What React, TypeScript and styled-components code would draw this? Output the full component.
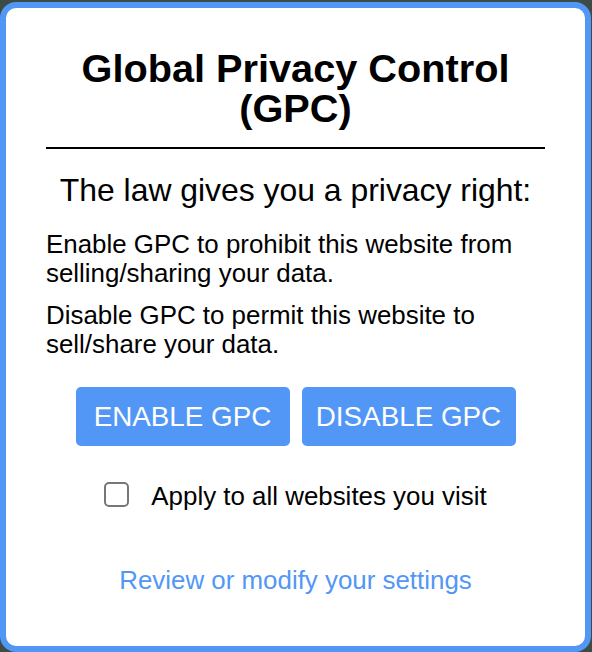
import React from "react";
import styled, { createGlobalStyle } from "styled-components";

const Global = createGlobalStyle`
  html, body { margin: 0; padding: 0; background: #3d4b45; overflow: hidden; }
  body { font-family: "Liberation Sans", Arial, sans-serif; }
`;

const Card = styled.div`
  box-sizing: border-box;
  margin-top: 2px;
  width: 591px;
  height: 650px;
  background: #fff;
  border: 6px solid #5297f6;
  border-radius: 16px;
  padding: 40px 40px 0 40px;
  display: flex;
  flex-direction: column;
  align-items: center;
`;

const Title = styled.h1`
  margin: 0;
  font-size: 39.7px;
  line-height: 40px;
  font-weight: 700;
  text-align: center;
  color: #000;
`;

const Divider = styled.hr`
  width: 100%;
  border: none;
  border-top: 2px solid #000;
  margin: 19px 0 0;
`;

const Subtitle = styled.h2`
  margin: 23px 0 0;
  font-size: 31.9px;
  line-height: 36px;
  font-weight: 400;
  text-align: center;
  color: #000;
`;

const Paragraph = styled.p<{ $top: number }>`
  align-self: stretch;
  margin: ${(p) => p.$top}px 0 0;
  font-size: 25.9px;
  line-height: 28.5px;
  color: #000;
`;

const ButtonRow = styled.div`
  display: flex;
  gap: 12px;
  margin-top: 29px;
`;

const Button = styled.button`
  box-sizing: border-box;
  width: 214px;
  height: 59px;
  padding: 0;
  border: none;
  border-radius: 5px;
  background: #5297f6;
  color: #fff;
  font-family: "Liberation Sans", Arial, sans-serif;
  font-size: 27.8px;
  cursor: pointer;
`;

const CheckRow = styled.label`
  display: flex;
  align-items: center;
  gap: 22px;
  margin-top: 35px;
  font-size: 25.9px;
  line-height: 30px;
  color: #000;
`;

const Box = styled.span`
  box-sizing: border-box;
  width: 25px;
  height: 25px;
  margin-top: -3px;
  border: 2px solid #777;
  border-radius: 5px;
  background: #fff;
`;

const Link = styled.a`
  margin-top: 54px;
  font-size: 25.9px;
  line-height: 30px;
  color: #5297f6;
  text-decoration: none;
`;

export default function App() {
  return (
    <>
      <Global />
      <Card>
        <Title>
          Global Privacy Control
          <br />
          (GPC)
        </Title>
        <Divider />
        <Subtitle>The law gives you a privacy right:</Subtitle>
        <Paragraph $top={22}>
          Enable GPC to prohibit this website from selling/sharing your data.
        </Paragraph>
        <Paragraph $top={14}>
          Disable GPC to permit this website to sell/share your data.
        </Paragraph>
        <ButtonRow>
          <Button>ENABLE GPC</Button>
          <Button>DISABLE GPC</Button>
        </ButtonRow>
        <CheckRow>
          <Box />
          Apply to all websites you visit
        </CheckRow>
        <Link href="#">Review or modify your settings</Link>
      </Card>
    </>
  );
}
